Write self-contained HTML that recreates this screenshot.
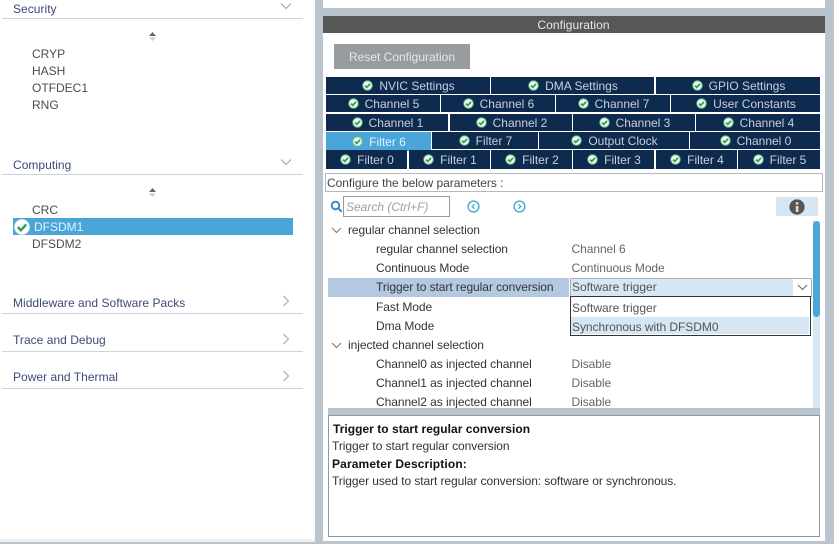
<!DOCTYPE html>
<html><head><meta charset="utf-8"><style>
html,body{margin:0;padding:0}
body{width:834px;height:544px;position:relative;overflow:hidden;background:#b9c4cc;font:12px/14px "Liberation Sans",sans-serif;color:#3b3b3b}
div,svg{position:absolute}
.t{white-space:nowrap}
.h{left:13px;color:#3c4a78;letter-spacing:.03px}
.l{left:2px;width:301px;height:1px;background:#cbd4dd}
.i{left:32px;color:#4c4c4c}
.tab{background:#0f2a4f;color:#c8d0da;display:flex;align-items:center;justify-content:center;white-space:nowrap;box-sizing:border-box;padding-left:1px}
.tab svg{position:static;margin-right:6px;flex:none}
.n{left:376px;color:#333;letter-spacing:-.06px}
.v{left:571.5px;color:#666;letter-spacing:-.06px}
.g{left:348px;color:#333;letter-spacing:-.06px}
</style></head><body>
<svg width="0" height="0" style="position:absolute"><defs>
<symbol id="c" viewBox="0 0 12 12"><circle cx="6" cy="6" r="5.2" fill="#eef8f0" stroke="#62bb82" stroke-width="1"/><path d="M3.3 6.1L5.2 8L8.8 4.2" fill="none" stroke="#2f9e58" stroke-width="1.9"/></symbol>
</defs></svg>

<!-- left panel -->
<div style="left:0;top:0;width:315px;height:540px;background:#fff"></div>
<div style="left:0;top:539px;width:315px;height:3px;background:#eef1f3"></div>
<div class="t h" style="top:2px">Security</div>
<div class="l" style="top:18px"></div>
<svg style="left:280px;top:2px" width="12" height="8"><path d="M1 1.5L6 6.5L11 1.5" fill="none" stroke="#a0a0a0"/></svg>
<svg style="left:148px;top:31px" width="9" height="11"><path d="M4.5 1L8 5H1Z" fill="#666"/><path d="M1 6.5H8L4.5 10Z" fill="#ccc"/></svg>
<div class="t i" style="top:47px">CRYP</div>
<div class="t i" style="top:64px">HASH</div>
<div class="t i" style="top:81px">OTFDEC1</div>
<div class="t i" style="top:98px">RNG</div>
<div class="t h" style="top:158px">Computing</div>
<div class="l" style="top:174px"></div>
<svg style="left:280px;top:158px" width="12" height="8"><path d="M1 1.5L6 6.5L11 1.5" fill="none" stroke="#a0a0a0"/></svg>
<svg style="left:148px;top:187px" width="9" height="11"><path d="M4.5 1L8 5H1Z" fill="#666"/><path d="M1 6.5H8L4.5 10Z" fill="#ccc"/></svg>
<div class="t i" style="top:203px">CRC</div>
<div style="left:13px;top:218px;width:280px;height:17px;background:#4aa6d9"></div>
<svg style="left:14px;top:219px" width="16" height="16"><circle cx="8" cy="8" r="7.7" fill="#fff"/><path d="M3.8 8L6.9 11.2L12.2 5.5" fill="none" stroke="#2f9e58" stroke-width="2.4"/></svg>
<div class="t" style="left:34px;top:220px;color:#e6f2fa">DFSDM1</div>
<div class="t i" style="top:237px">DFSDM2</div>
<div class="t h" style="top:296px">Middleware and Software Packs</div>
<div class="l" style="top:313px"></div>
<svg style="left:282px;top:295px" width="8" height="12"><path d="M1.5 1L6.5 6L1.5 11" fill="none" stroke="#a0a0a0"/></svg>
<div class="t h" style="top:333px">Trace and Debug</div>
<div class="l" style="top:351px"></div>
<svg style="left:282px;top:333px" width="8" height="12"><path d="M1.5 1L6.5 6L1.5 11" fill="none" stroke="#a0a0a0"/></svg>
<div class="t h" style="top:370px">Power and Thermal</div>
<div class="l" style="top:388px"></div>
<svg style="left:282px;top:370px" width="8" height="12"><path d="M1.5 1L6.5 6L1.5 11" fill="none" stroke="#a0a0a0"/></svg>

<!-- right panel -->
<div style="left:323px;top:0;width:502px;height:8px;background:#fff"></div>
<div style="left:323px;top:33px;width:502px;height:508px;background:#fff"></div>
<div style="left:323px;top:16px;width:502px;height:17px;background:#555856;color:#e8e8e8;text-align:center;line-height:18px;letter-spacing:.06px;box-sizing:border-box;padding-right:1px">Configuration</div>
<div style="left:334px;top:44px;width:136px;height:25px;background:#999c9e;color:#e4e6e8;text-align:center;line-height:27px">Reset Configuration</div>

<!-- tabs row 1 -->
<div class="tab" style="left:326px;top:77px;width:164px;height:17px"><svg width="11" height="11"><use href="#c"/></svg>NVIC Settings</div>
<div class="tab" style="left:491px;top:77px;width:163px;height:17px"><svg width="11" height="11"><use href="#c"/></svg>DMA Settings</div>
<div class="tab" style="left:656px;top:77px;width:164px;height:17px"><svg width="11" height="11"><use href="#c"/></svg>GPIO Settings</div>
<!-- row 2 -->
<div class="tab" style="left:326px;top:95px;width:114px;height:17px"><svg width="11" height="11"><use href="#c"/></svg>Channel 5</div>
<div class="tab" style="left:441px;top:95px;width:114px;height:17px"><svg width="11" height="11"><use href="#c"/></svg>Channel 6</div>
<div class="tab" style="left:556px;top:95px;width:114px;height:17px"><svg width="11" height="11"><use href="#c"/></svg>Channel 7</div>
<div class="tab" style="left:671px;top:95px;width:149px;height:17px"><svg width="11" height="11"><use href="#c"/></svg>User Constants</div>
<!-- row 3 -->
<div class="tab" style="left:326px;top:114px;width:122px;height:17px"><svg width="11" height="11"><use href="#c"/></svg>Channel 1</div>
<div class="tab" style="left:450px;top:114px;width:122px;height:17px"><svg width="11" height="11"><use href="#c"/></svg>Channel 2</div>
<div class="tab" style="left:573px;top:114px;width:122px;height:17px"><svg width="11" height="11"><use href="#c"/></svg>Channel 3</div>
<div class="tab" style="left:696px;top:114px;width:124px;height:17px"><svg width="11" height="11"><use href="#c"/></svg>Channel 4</div>
<!-- row 4 -->
<div class="tab" style="left:326px;top:132px;width:105px;height:19px;background:#4aa6d9;color:#e6f2fa"><svg width="11" height="11"><use href="#c"/></svg>Filter 6</div>
<div class="tab" style="left:432px;top:132px;width:106px;height:17px"><svg width="11" height="11"><use href="#c"/></svg>Filter 7</div>
<div class="tab" style="left:539px;top:132px;width:150px;height:17px"><svg width="11" height="11"><use href="#c"/></svg>Output Clock</div>
<div class="tab" style="left:690px;top:132px;width:130px;height:17px"><svg width="11" height="11"><use href="#c"/></svg>Channel 0</div>
<!-- row 5 -->
<div class="tab" style="left:326px;top:150px;width:81px;height:19px"><svg width="11" height="11"><use href="#c"/></svg>Filter 0</div>
<div class="tab" style="left:409px;top:150px;width:81px;height:19px"><svg width="11" height="11"><use href="#c"/></svg>Filter 1</div>
<div class="tab" style="left:491px;top:150px;width:81px;height:19px"><svg width="11" height="11"><use href="#c"/></svg>Filter 2</div>
<div class="tab" style="left:573px;top:150px;width:81px;height:19px"><svg width="11" height="11"><use href="#c"/></svg>Filter 3</div>
<div class="tab" style="left:656px;top:150px;width:81px;height:19px"><svg width="11" height="11"><use href="#c"/></svg>Filter 4</div>
<div class="tab" style="left:738px;top:150px;width:82px;height:19px"><svg width="11" height="11"><use href="#c"/></svg>Filter 5</div>

<!-- configure line -->
<div class="t" style="left:325px;top:173px;width:495px;height:17px;border:1px solid #b4b8bc;line-height:19px;padding-left:1px;color:#444;letter-spacing:-.03px">Configure the below parameters :</div>

<!-- search row -->
<svg style="left:330px;top:200px" width="13" height="13"><circle cx="5.5" cy="5.5" r="3.8" fill="none" stroke="#2f86c8" stroke-width="1.8"/><path d="M8.3 8.3L11.8 11.8" stroke="#2f86c8" stroke-width="2"/></svg>
<div class="t" style="left:343px;top:196px;width:103px;height:19px;border:1px solid #9a9a9a;color:#a0a0a0;font-style:italic;line-height:20px;padding-left:2px">Search (Ctrl+F)</div>
<svg style="left:467px;top:200px" width="13" height="13"><circle cx="6.5" cy="6.5" r="5.4" fill="none" stroke="#4aa6d9" stroke-width="1.4"/><path d="M7.5 4.3L5.2 6.5L7.5 8.7" fill="none" stroke="#4aa6d9" stroke-width="1.2"/></svg>
<svg style="left:513px;top:200px" width="13" height="13"><circle cx="6.5" cy="6.5" r="5.4" fill="none" stroke="#4aa6d9" stroke-width="1.4"/><path d="M5.5 4.3L7.8 6.5L5.5 8.7" fill="none" stroke="#4aa6d9" stroke-width="1.2"/></svg>
<div style="left:776px;top:197px;width:42px;height:19px;background:#d6e6f3"></div>
<svg style="left:789px;top:199px" width="16" height="16"><circle cx="8" cy="8" r="7.6" fill="#555"/><rect x="6.8" y="7" width="2.6" height="6" fill="#ddd"/><rect x="6.8" y="3.2" width="2.6" height="2.4" fill="#ddd"/></svg>

<!-- scrollbar -->
<div style="left:813px;top:221px;width:7px;height:187px;background:#d6e6f3"></div>
<div style="left:813px;top:221px;width:7px;height:96px;background:#4aa6d9;border-radius:4px"></div>

<!-- tree -->
<svg style="left:331px;top:227px" width="11" height="7"><path d="M1 1L5.5 5.5L10 1" fill="none" stroke="#777"/></svg>
<div class="t g" style="top:223px">regular channel selection</div>
<div class="t n" style="top:242px">regular channel selection</div>
<div class="t v" style="top:242px">Channel 6</div>
<div class="t n" style="top:261px">Continuous Mode</div>
<div class="t v" style="top:261px">Continuous Mode</div>
<div style="left:328px;top:278px;width:241px;height:19px;background:#b4c8e2"></div>
<div class="t n" style="top:280px">Trigger to start regular conversion</div>
<div style="left:570px;top:278px;width:240px;height:18px;background:#d6e6f3;border:1px solid #a8b2bc;border-bottom:0"></div>
<div style="left:793px;top:279px;width:18px;height:18px;background:#fff"></div>
<svg style="left:797px;top:284px" width="11" height="7"><path d="M1 1L5.5 5.5L10 1" fill="none" stroke="#666"/></svg>
<div class="t" style="left:572px;top:280px;color:#555">Software trigger</div>
<div class="t n" style="top:300px">Fast Mode</div>
<div class="t n" style="top:319px">Dma Mode</div>
<div style="left:570px;top:296px;width:239px;height:38px;background:#fff;border:1px solid #333"></div>
<div style="left:571px;top:317px;width:238px;height:17px;background:#d6e6f3"></div>
<div class="t" style="left:572px;top:301px;color:#555">Software trigger</div>
<div class="t" style="left:572px;top:320px;color:#555;letter-spacing:-.04px">Synchronous with DFSDM0</div>
<svg style="left:331px;top:342px" width="11" height="7"><path d="M1 1L5.5 5.5L10 1" fill="none" stroke="#777"/></svg>
<div class="t g" style="top:338px">injected channel selection</div>
<div class="t n" style="top:357px">Channel0 as injected channel</div>
<div class="t v" style="top:357px">Disable</div>
<div class="t n" style="top:376px">Channel1 as injected channel</div>
<div class="t v" style="top:376px">Disable</div>
<div class="t n" style="top:395px">Channel2 as injected channel</div>
<div class="t v" style="top:395px">Disable</div>

<!-- splitter and description -->
<div style="left:328px;top:408px;width:492px;height:7px;background:#b9c4cc"></div>
<div style="left:328px;top:415px;width:490px;height:120px;background:#fff;border:1px solid #8d98a4"></div>
<div class="t" style="left:333px;top:422px;font-weight:bold;color:#111;letter-spacing:.03px">Trigger to start regular conversion</div>
<div class="t" style="left:332px;top:439px;color:#333;letter-spacing:-.06px">Trigger to start regular conversion</div>
<div class="t" style="left:332px;top:457px;font-weight:bold;color:#111;letter-spacing:.13px">Parameter Description:</div>
<div class="t" style="left:332px;top:474px;color:#333;letter-spacing:-.08px">Trigger used to start regular conversion: software or synchronous.</div>
</body></html>
